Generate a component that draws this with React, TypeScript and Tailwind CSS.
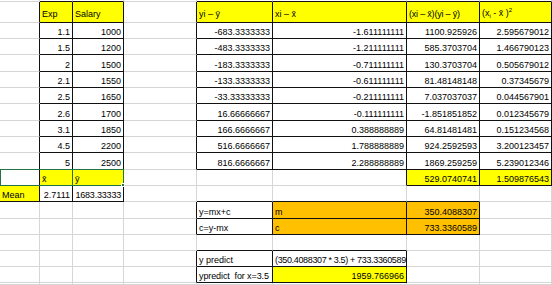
import React from "react";

type Cell = { t: React.ReactNode; right?: boolean; bg?: string; x?: string };

const Y = "bg-[#ffff00]";
const O = "bg-[#ffc000]";

const exp = ["1.1", "1.5", "2", "2.1", "2.5", "2.6", "3.1", "4.5", "5"];
const sal = ["1000", "1200", "1500", "1550", "1650", "1700", "1850", "2200", "2500"];
const dy = ["-683.3333333", "-483.3333333", "-183.3333333", "-133.3333333", "-33.33333333", "16.66666667", "166.6666667", "516.6666667", "816.6666667"];
const dx = ["-1.611111111", "-1.211111111", "-0.711111111", "-0.611111111", "-0.211111111", "-0.111111111", "0.388888889", "1.788888889", "2.288888889"];
const prod = ["1100.925926", "585.3703704", "130.3703704", "81.48148148", "7.037037037", "-1.851851852", "64.81481481", "924.2592593", "1869.259259"];
const sq = ["2.595679012", "1.466790123", "0.505679012", "0.37345679", "0.044567901", "0.012345679", "0.151234568", "3.200123457", "5.239012346"];

const H = "pb-[3px]";

const cells: Record<string, Cell> = {
  "1-1": { t: "Exp", bg: Y, x: H },
  "1-2": { t: "Salary", bg: Y, x: H },
  "1-4": { t: "yi – ȳ", bg: Y, x: H },
  "1-5": { t: "xi – x̄", bg: Y, x: H },
  "1-6": { t: "(xi – x̄)(yi – ȳ)", bg: Y, x: "pb-[3px] tracking-[-0.2px]" },
  "1-7": {
    t: (
      <span>
        (x<span className="text-[6px] relative top-[2px]">i</span> - x̄ )
        <span className="text-[6px] relative -top-[4px]">2</span>
      </span>
    ),
    bg: Y,
    x: H,
  },
  "11-1": { t: "x̄", bg: Y },
  "11-2": { t: "ȳ", bg: Y },
  "11-6": { t: "529.0740741", bg: Y, right: true },
  "11-7": { t: "1.509876543", bg: Y, right: true },
  "12-0": { t: "Mean", bg: Y },
  "12-1": { t: "2.7111", right: true },
  "12-2": { t: "1683.33333", right: true, x: "tracking-[-0.2px]" },
  "13-4": { t: "y=mx+c" },
  "13-5": { t: "m", bg: O },
  "13-6": { t: "350.4088307", bg: O, right: true },
  "14-4": { t: "c=y-mx" },
  "14-5": { t: "c", bg: O },
  "14-6": { t: "733.3360589", bg: O, right: true },
  "16-4": { t: "y predict" },
  "16-5": { t: "(350.4088307 * 3.5) + 733.3360589", x: "tracking-[-0.35px]" },
  "17-4": { t: "ypredict  for x=3.5", x: "tracking-[-0.1px]" },
  "17-5": { t: "1959.766966", bg: Y, right: true },
};

for (let i = 0; i < 9; i++) {
  const r = i + 2;
  cells[`${r}-1`] = { t: exp[i], right: true };
  cells[`${r}-2`] = { t: sal[i], right: true };
  cells[`${r}-4`] = { t: dy[i], right: true };
  cells[`${r}-5`] = { t: dx[i], right: true };
  cells[`${r}-6`] = { t: prod[i], right: true };
  cells[`${r}-7`] = { t: sq[i], right: true };
}

const inBox = (r: number, c: number) =>
  (r >= 1 && r <= 10 && (c === 1 || c === 2)) ||
  (r === 11 && (c === 1 || c === 2)) ||
  (r === 12 && c >= 0 && c <= 2) ||
  (r >= 1 && r <= 10 && c >= 4 && c <= 7) ||
  (r === 11 && (c === 6 || c === 7)) ||
  ((r === 13 || r === 14) && c >= 4 && c <= 6) ||
  ((r === 16 || r === 17) && (c === 4 || c === 5));

const NR = 19;
const NC = 9;

export default function App() {
  const out: React.ReactNode[] = [];
  for (let r = 0; r < NR; r++) {
    for (let c = 0; c < NC; c++) {
      const cell = cells[`${r}-${c}`];
      const rb = inBox(r, c) || inBox(r, c + 1) ? "border-r-[#111]" : "border-r-[#d6d6d6]";
      const bb = inBox(r, c) || inBox(r + 1, c) ? "border-b-[#111]" : "border-b-[#d6d6d6]";
      const bg = cell?.bg ?? "bg-white";
      const al = cell?.right ? "justify-end pr-[2px]" : "justify-start pl-[2px]";
      const pb = cell?.x?.includes("pb-[3px]") ? "" : "pb-px";
      out.push(
        <div
          key={`${r}-${c}`}
          className={`border-r border-b ${rb} ${bb} ${bg} flex items-end ${al} ${pb} leading-[10px] whitespace-pre min-w-0 min-h-0 ${cell?.x ?? ""}`}
        >
          {cell?.t}
        </div>
      );
    }
  }
  return (
    <div className="relative w-[552px] h-[285px] overflow-hidden bg-white text-black text-[9px] font-['Liberation_Sans',Arial,sans-serif]">
      <div className="grid w-full h-full grid-cols-[40px_33px_51px_73px_76px_134px_73px_72px_1fr] grid-rows-[2px_21px_16px_16px_17px_16px_16px_17px_16px_16px_17px_16px_16px_17px_16px_16px_16px_16px_2px]">
        {out}
      </div>
      <div className="absolute left-0 top-[169px] w-[124px] h-[17px] border border-[#217346]" />
      <div className="absolute left-[72px] top-[169px] w-px h-[17px] bg-[#217346]" />
      <div className="absolute left-[121px] top-[183px] w-[4px] h-[4px] bg-[#217346] border border-white" />
    </div>
  );
}
